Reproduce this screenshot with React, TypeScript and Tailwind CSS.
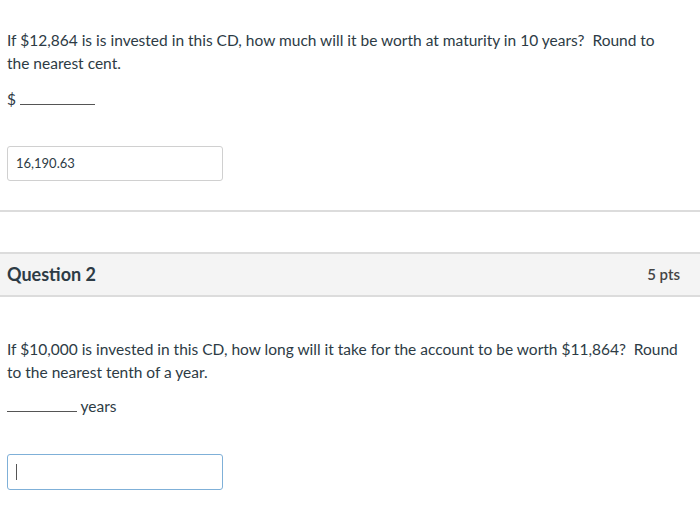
export default function App() {
  return (
    <div className="w-[700px] h-[518px] overflow-hidden bg-white text-[#2d3b45] font-['Lato',sans-serif]">
      <div className="pl-[7px] pr-[20px] pt-[29px]">
        <p className="text-[15.5px] leading-[23px]">
          If $12,864 is is invested in this CD, how much will it be worth at maturity in 10 years?&nbsp; Round to the nearest cent.
        </p>
        <p className="mt-[13px] text-[15.5px] leading-[23px]">
          $ <span className="inline-block w-[75px] border-b border-[#555] align-baseline"></span>
        </p>
        <div className="mt-[35px] w-[216px] h-[35px] border border-[#d0d0d0] rounded-[3px] flex items-center px-[8px] text-[13px]">
          16,190.63
        </div>
      </div>
      <div className="mt-[29px] h-[2px] bg-[#dcdcdc]"></div>
      <div className="mt-[40px] h-[45px] border-y-2 border-[#dcdcdc] bg-[#f4f4f4] flex items-center justify-between px-[7px]">
        <span className="text-[18px] font-bold text-[#2d3b45]">Question 2</span>
        <span className="text-[15px] font-semibold text-[#444] mr-[13px]">5 pts</span>
      </div>
      <div className="pl-[7px] pr-[20px] pt-[41px]">
        <p className="text-[15.5px] leading-[23px]">
          If $10,000 is invested in this CD, how long will it take for the account to be worth $11,864?&nbsp; Round to the nearest tenth of a year.
        </p>
        <p className="mt-[11px] text-[15.5px] leading-[23px]">
          <span className="inline-block w-[70px] border-b border-[#555] align-baseline"></span> years
        </p>
        <div className="mt-[36px] w-[216px] h-[36px] border border-[#7fb0d8] rounded-[3px] flex items-center px-[8px]">
          <span className="w-[1px] h-[16px] bg-[#555]"></span>
        </div>
      </div>
    </div>
  );
}
